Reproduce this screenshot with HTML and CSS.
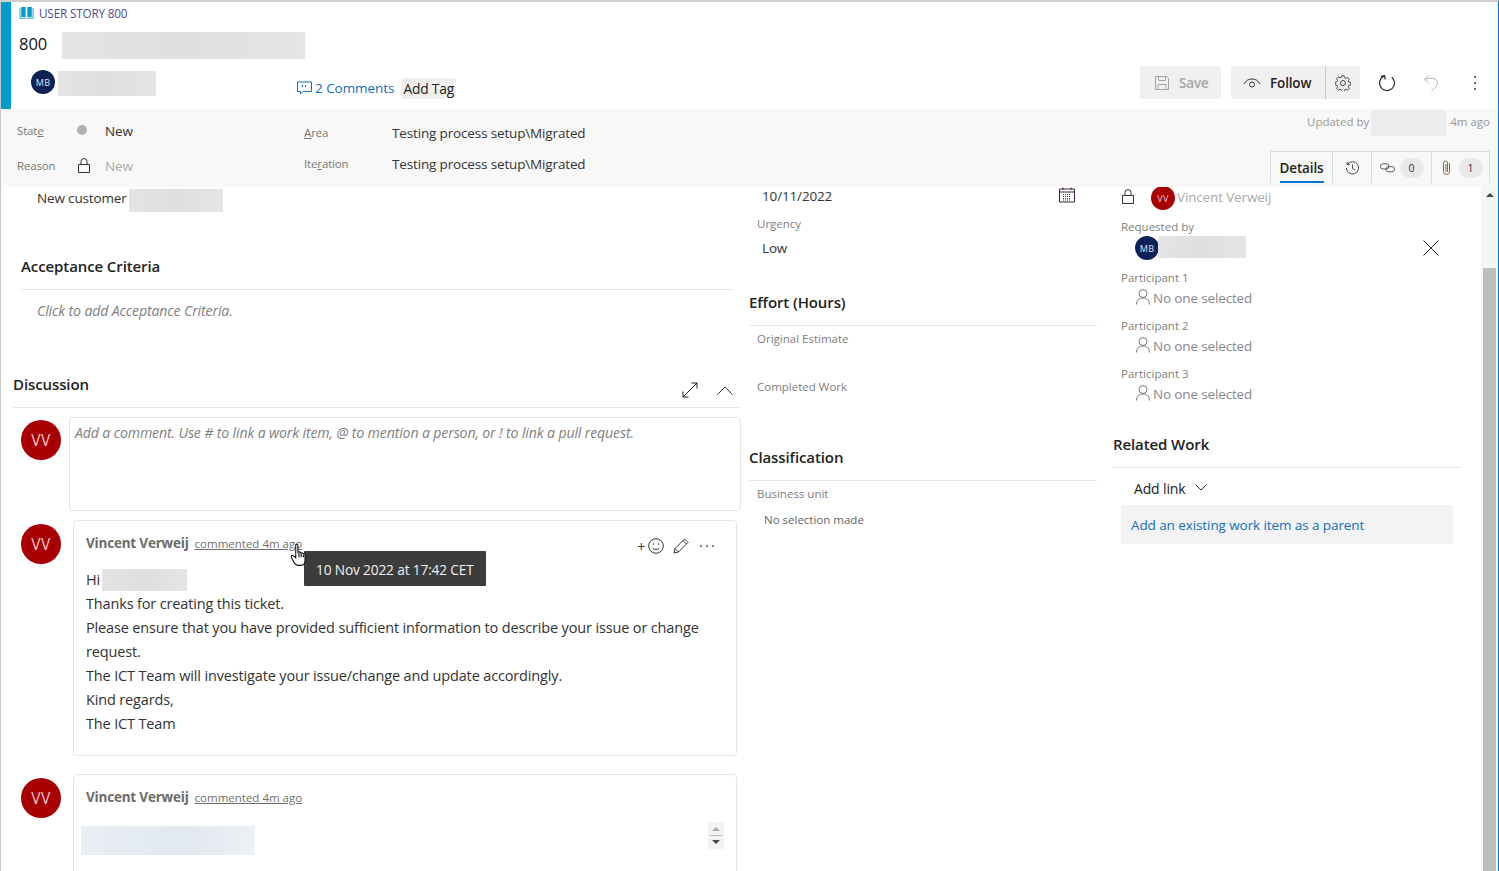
FILE: index.html
```html
<!DOCTYPE html>
<html lang="en">
<head>
<meta charset="utf-8">
<title>User Story 800</title>
<link rel="stylesheet" href="styles.css">
</head>
<body>
<div class="page">
  <header class="head">
    <div class="type-row">
      <svg class="ico16" viewBox="0 0 16 16"><path d="M.5 2.500v11.500h7M15.500 2.500v11.500h-7" fill="none" stroke="#009ccc"/><path d="M2 1h5v11.500H2zM9 1h5v11.500H9z" fill="#009ccc"/></svg>
      <span class="type-label">USER STORY 800</span>
    </div>
    <div class="title-row"><span class="item-id">800</span><span class="blur blur-title"></span></div>
    <div class="owner-row">
      <span class="avatar navy">MB</span><span class="blur blur-owner"></span>
      <a class="comments">
        <svg class="ico15" viewBox="0 0 15 14"><path d="M.5 1h14v9.500H6L3.500 13v-2.500h-3z" fill="none" stroke="#106ebe"/><path d="M5.500 4v2M8.500 4v2" stroke="#106ebe"/></svg>
        <span>2 Comments</span>
      </a>
      <span class="add-tag">Add Tag</span>
      <div class="actions">
        <button class="btn save">
          <svg class="ico16" viewBox="0 0 16 16"><path d="M1.500 1.500h11l2 2v11h-13z" fill="none" stroke="#a8a0a8"/><path d="M4.500 1.500v4h7v-4M4 14.500v-5h8v5" fill="none" stroke="#a8a0a8"/></svg>
          <span>Save</span>
        </button>
        <div class="follow-group">
          <button class="btn follow">
            <svg class="ico18" viewBox="0 0 18 12"><path d="M1 7c2-3.500 4.500-5 8-5s6 1.500 8 5" fill="none" stroke="#333"/><circle cx="9" cy="7.500" r="2.500" fill="none" stroke="#333"/></svg>
            <span>Follow</span>
          </button>
          <button class="btn gear">
            <svg class="ico16" viewBox="0 0 16 16"><path d="M6.700.8h2.600l.4 2 1.300.6 1.800-1 1.800 1.800-1 1.800.6 1.300 1.900.5v2.500l-1.900.5-.6 1.300 1 1.800-1.800 1.800-1.800-1-1.300.6-.4 1.900H6.700l-.4-1.900-1.300-.6-1.800 1-1.800-1.800 1-1.800-.6-1.300-1.900-.5V7.300l1.900-.5.6-1.300-1-1.800 1.800-1.800 1.800 1 1.300-.6z" fill="none" stroke="#444" transform="translate(.3 .1) scale(.96)"/><circle cx="8" cy="8" r="2.500" fill="none" stroke="#444"/></svg>
          </button>
        </div>
        <button class="icon-btn refresh">
          <svg class="ico18" viewBox="0 0 18 18"><path d="M5.800 2.300A7.500 7.500 0 1 0 13.800 3.300" fill="none" stroke="#222" stroke-width="1.200"/><path d="M2.800 2.400l3.800-.6.600 3.700" fill="none" stroke="#222" stroke-width="1.200"/></svg>
        </button>
        <button class="icon-btn undo">
          <svg class="ico18" viewBox="0 0 18 18"><path d="M6 1 1.500 5.500 5.500 9M1.500 5.500C7 3 14.500 4 14.500 9c0 3-3 5.500-6 8" fill="none" stroke="#b4b4b4"/></svg>
        </button>
        <button class="icon-btn more"><span class="dot"></span><span class="dot"></span><span class="dot"></span></button>
      </div>
    </div>
  </header>

  <section class="meta">
    <div class="meta-col state-col">
      <div class="meta-row"><span class="meta-label w60">Stat<u>e</u></span><span class="state-dot"></span><span class="meta-val">New</span></div>
      <div class="meta-row"><span class="meta-label w60">Reason</span>
        <svg class="lock" viewBox="0 0 12 15"><path d="M.5 6.500h11v8H.5zM3 6.500V3.500a3 3 0 0 1 6 0v3" fill="none" stroke="#333"/></svg>
        <span class="meta-val muted">New</span></div>
    </div>
    <div class="meta-col area-col">
      <div class="meta-row"><span class="meta-label w88"><u>A</u>rea</span><span class="meta-val">Testing process setup\Migrated</span></div>
      <div class="meta-row"><span class="meta-label w88">Ite<u>r</u>ation</span><span class="meta-val">Testing process setup\Migrated</span></div>
    </div>
    <div class="meta-right">
      <div class="updated"><span>Updated by</span><span class="blur blur-upd"></span><span>4m ago</span></div>
      <div class="tabs">
        <div class="tab tab-details"><span>Details</span></div>
        <div class="tab tab-hist">
          <svg class="ico15" viewBox="0 0 16 16"><path d="M2.500 3.500A7 7 0 1 1 1 8" fill="none" stroke="#333"/><path d="M2 1v3h3M8 4v4.500l3 1.500" fill="none" stroke="#333"/></svg>
        </div>
        <div class="tab tab-links">
          <svg class="ico15" viewBox="0 0 16 10"><rect x=".5" y=".5" width="9" height="5.500" rx="2.700" fill="none" stroke="#555"/><rect x="6.500" y="3.500" width="9" height="5.500" rx="2.700" fill="none" stroke="#555"/></svg>
          <span class="count">0</span>
        </div>
        <div class="tab tab-att">
          <svg class="clip" viewBox="0 0 9 15"><path d="M7.500 3v8.500a3 3 0 0 1-6 0V3a2 2 0 0 1 4 0v8a.8.800 0 0 1-1.600 0V4" fill="none" stroke="#8a6a30"/></svg>
          <span class="count">1</span>
        </div>
      </div>
    </div>
  </section>

  <main class="body">
    <div class="cols">
      <div class="col col-left">
        <div class="desc-line"><span class="text">New customer</span><span class="blur blur-cust"></span></div>
        <h2 class="sec sec-ac">Acceptance Criteria</h2>
        <p class="placeholder ac-ph">Click to add Acceptance Criteria.</p>
        <div class="disc-head">
          <h2 class="disc-title">Discussion</h2>
          <svg class="ico16" viewBox="0 0 16 16"><path d="M1 15 15 1M9.500 1H15v5.500M1 9.500V15h5.500" fill="none" stroke="#222"/></svg>
          <svg class="ico-chev" viewBox="0 0 16 9"><path d="M.5 8.500 8 1l7.500 7.500" fill="none" stroke="#333"/></svg>
        </div>
        <div class="editor-row">
          <span class="avatar red big">VV</span>
          <div class="editor">Add a comment. Use # to link a work item, @ to mention a person, or ! to link a pull request.</div>
        </div>
        <article class="comment first">
          <span class="avatar red big">VV</span>
          <div class="card card1">
            <div class="card-head">
              <span class="author">Vincent Verweij</span><a class="when">commented 4m ago</a>
              <div class="card-actions">
                <span class="plus">+</span>
                <svg class="ico16" viewBox="0 0 16 16"><circle cx="8" cy="8" r="7.300" fill="none" stroke="#333"/><circle cx="5.500" cy="6" r=".8" fill="#333"/><circle cx="10.500" cy="6" r=".8" fill="#333"/><path d="M4.500 10c1.800 2 5.200 2 7 0" fill="none" stroke="#333"/></svg>
                <svg class="ico16 pen" viewBox="0 0 16 16"><path d="M1 15l1-4.500L11.500 1 15 4.500 5.500 14zM10 2.500 13.500 6M2 10.500 5.500 14" fill="none" stroke="#333"/></svg>
                <span class="dots3"><i></i><i></i><i></i></span>
              </div>
            </div>
            <div class="card-body">
              <div class="hi">Hi<span class="blur blur-hi"></span></div>
              <div>Thanks for creating this ticket.</div>
              <div>Please ensure that you have provided sufficient information to describe your issue or change request.</div>
              <div>The ICT Team will investigate your issue/change and update accordingly.</div>
              <div>Kind regards,</div>
              <div>The ICT Team</div>
            </div>
          </div>
        </article>
        <article class="comment second">
          <span class="avatar red big">VV</span>
          <div class="card card2">
            <div class="card-head">
              <span class="author">Vincent Verweij</span><a class="when">commented 4m ago</a>
            </div>
            <div class="attach-row">
              <span class="blur blur-attach"></span>
              <span class="mini-scroll"><i class="up"></i><b></b><i class="down"></i></span>
            </div>
          </div>
        </article>
      </div>

      <div class="col col-mid">
        <div class="date-row"><span class="text">10/11/2022</span>
          <svg class="ico16" viewBox="0 0 16 16"><path d="M.5 2h15v13H.5zM.5 5h15M4 .5v2.500M12 .5v2.500" fill="none" stroke="#3a2040"/><path d="M4 7.500h8M4 9.500h8M4 11.500h8M4 13h8" stroke="#6a2a80" stroke-dasharray="1 1"/></svg>
        </div>
        <div class="lbl urg">Urgency</div>
        <div class="text low">Low</div>
        <h2 class="sec sec-effort">Effort (Hours)</h2>
        <div class="lbl oe">Original Estimate</div>
        <div class="lbl cw">Completed Work</div>
        <h2 class="sec sec-class">Classification</h2>
        <div class="lbl bu">Business unit</div>
        <div class="nosel">No selection made</div>
      </div>

      <div class="col col-right">
        <div class="assigned">
          <svg class="lock" viewBox="0 0 12 15"><path d="M.5 6.500h11v8H.5zM3 6.500V3.500a3 3 0 0 1 6 0v3" fill="none" stroke="#333"/></svg>
          <span class="avatar red">VV</span><span class="muted-name">Vincent Verweij</span>
        </div>
        <div class="lbl req">Requested by</div>
        <div class="req-row">
          <span class="avatar navy">MB</span><span class="blur blur-req"></span>
          <svg class="ico-x" viewBox="0 0 16 16"><path d="M.5.5l15 15M15.500.5l-15 15" fill="none" stroke="#223"/></svg>
        </div>
        <div class="lbl part">Participant 1</div>
        <div class="none-row"><svg class="person" viewBox="0 0 14 16"><circle cx="7" cy="4.500" r="4" fill="none" stroke="#777"/><path d="M.5 15.500c0-4 2.500-6.500 6.500-6.500s6.500 2.500 6.500 6.500" fill="none" stroke="#777"/></svg><span>No one selected</span></div>
        <div class="lbl part">Participant 2</div>
        <div class="none-row"><svg class="person" viewBox="0 0 14 16"><circle cx="7" cy="4.500" r="4" fill="none" stroke="#777"/><path d="M.5 15.500c0-4 2.500-6.500 6.500-6.500s6.500 2.500 6.500 6.500" fill="none" stroke="#777"/></svg><span>No one selected</span></div>
        <div class="lbl part">Participant 3</div>
        <div class="none-row"><svg class="person" viewBox="0 0 14 16"><circle cx="7" cy="4.500" r="4" fill="none" stroke="#777"/><path d="M.5 15.500c0-4 2.500-6.500 6.500-6.500s6.500 2.500 6.500 6.500" fill="none" stroke="#777"/></svg><span>No one selected</span></div>
        <h2 class="sec sec-rel">Related Work</h2>
        <div class="add-link"><span>Add link</span><svg class="ico-down" viewBox="0 0 12 7"><path d="M.5.5 6 6l5.500-5.500" fill="none" stroke="#333"/></svg></div>
        <div class="add-parent">Add an existing work item as a parent</div>
      </div>
    </div>
    <div class="scrollbar"><span class="arrow-up"></span><span class="thumb"></span></div>
  </main>

  <div class="tooltip">10 Nov 2022 at 17:42 CET</div>
  <svg class="cursor" viewBox="0 0 16 22"><path d="M5 1.500c1-.8 2-.3 2 1v6l1-.3c.8-.2 1.300.2 1.500.8l.8-.1c.8-.1 1.200.3 1.400.9.900-.2 1.800.2 1.800 1.200v5c0 2.500-1.500 4.500-4 4.500H7c-1.500 0-2.500-1-3.500-2.500L1 13c-.6-1 .6-2.200 1.700-1.400L5 13.500z" fill="#fff" stroke="#111"/><path d="M8 9v4M10 9.500V13M12 10.500V13" stroke="#111" fill="none"/></svg>
</div>
</body>
</html>
```
FILE: styles.css
```css
* { box-sizing: border-box; }
html, body { margin: 0; padding: 0; height: 100%; overflow: hidden; background: #fff; }
body { font-family: "Open Sans", "Noto Sans", sans-serif; font-size: 13.5px; letter-spacing: -.15px; color: #333; }
button { font: inherit; letter-spacing: inherit; border: 0; padding: 0; background: none; color: inherit; }
svg { display: block; flex: none; }
h2 { margin: 0; font-weight: 600; }
a { color: inherit; }

.page { position: relative; width: 1499px; height: 871px; display: flex; flex-direction: column; border-top: 2px solid #cfcfcf; border-left: 1px solid #c8c8c8; border-right: 1px solid #0078d4; overflow: hidden; }
.blur { display: block; flex: none; background: linear-gradient(90deg, #e4e4e4, #dfdfdf 50%, #e5e5e5); }

.ico15 { width: 15px; height: 14px; }
.ico16 { width: 16px; height: 16px; }
.ico18 { width: 18px; height: 18px; }

.avatar { display: flex; align-items: center; justify-content: center; flex: none; width: 24px; height: 24px; border-radius: 50%; font-size: 9px; letter-spacing: .3px; font-kerning: none; color: #dfe4ee; }
.avatar.big { width: 40px; height: 40px; font-size: 15.5px; letter-spacing: .6px; }
.navy { background: #0c2257; }
.red { background: #a80000; color: #f0c8c8; }

.head { flex: none; height: 107px; border-left: 10px solid #009ccc; }
.type-row { display: flex; align-items: center; height: 24px; padding: 0 0 2px 8px; gap: 5px; }
.type-row .ico16 { width: 15px; height: 14px; }
.type-label { font-size: 11.7px; color: #4c4c94; }
.title-row { display: flex; align-items: center; height: 40px; padding-left: 8px; }
.item-id { width: 43px; font-size: 16.5px; color: #111; letter-spacing: 0; margin-top: -6px; }
.blur-title { width: 243px; height: 27px; margin-top: -2px; }
.owner-row { display: flex; align-items: flex-start; height: 43px; padding-left: 20px; }
.owner-row .avatar { margin-top: 4px; }
.blur-owner { width: 98px; height: 25px; margin: 5px 0 0 3px; }
.comments { display: flex; align-items: center; gap: 3px; margin: 13px 0 0 141px; color: #106ebe; height: 18px; letter-spacing: -.05px; }
.add-tag { margin: 12px 0 0 7px; height: 21px; line-height: 21px; padding: 0 2px; background: #f0f0f0; border-radius: 2px; font-weight: 500; color: #222; font-size: 13.8px; letter-spacing: -.2px; }
.actions { display: flex; align-items: flex-start; margin-left: auto; }
.btn { display: flex; align-items: center; height: 33px; background: #f0f0f0; border-radius: 2px; }
.save { width: 81px; gap: 9px; padding-left: 14px; color: #a6a6a6; font-weight: 600; }
.follow-group { display: flex; margin-left: 10px; }
.follow { width: 95px; padding-left: 12px; gap: 9px; font-weight: 600; color: #222; border-right: 1px solid #c8c8c8; border-radius: 2px 0 0 2px; }
.follow .ico18 { height: 12px; }
.gear { width: 34px; justify-content: center; border-radius: 0 2px 2px 0; }
.icon-btn { display: flex; flex-direction: column; align-items: center; justify-content: center; height: 33px; }
.refresh { width: 18px; margin-left: 18px; }
.undo { width: 18px; margin-left: 27px; }
.more { width: 4px; margin: 0 21px 0 32px; gap: 4px; }
.dot { width: 2px; height: 2px; background: #333; border-radius: 1px; }

.meta { flex: none; height: 78px; display: flex; background: #f8f8f8; position: relative; }
.meta-col { display: flex; flex-direction: column; }
.meta-row { display: flex; align-items: center; }
.state-col { width: 303px; padding: 12px 0 0 16px; gap: 16px; }
.state-col .meta-row { height: 19px; }
.area-col { padding-top: 14px; gap: 11px; }
.area-col .meta-row { height: 20px; }
.area-col .meta-label { margin-top: -2px; }
.meta-label { font-size: 11.5px; color: #777; }
.w60 { width: 60px; }
.w88 { width: 88px; }
.meta-val { color: #333; }
.muted { color: #aaa; }
.state-dot { width: 10px; height: 10px; border-radius: 50%; background: #b2b2b2; margin: 0 18px 2px 0; }
.lock { width: 12px; height: 15px; }
.state-col .lock { margin: 0 15px 0 1px; }
.meta-right { margin-left: auto; display: flex; flex-direction: column; align-items: flex-end; padding-right: 8px; }
.updated { display: flex; align-items: center; gap: 2px; height: 26px; font-size: 11.5px; color: #999; margin-top: 1px; letter-spacing: 0; }
.updated > span:not(.blur) { margin-top: -4px; }
.updated span:last-child { margin-left: 2px; }
.blur-upd { width: 75px; height: 26px; background: #ececec; }
.tabs { display: flex; height: 32px; margin-top: 15px; border: 1px solid #ddd; border-bottom: 0; }
.tab { display: flex; align-items: center; justify-content: center; position: relative; border-left: 1px solid #ddd; gap: 5px; }
.tab:first-child { border-left: 0; }
.tab-details { width: 61px; font-weight: 600; color: #222; }
.tab-details::after { content: ""; position: absolute; left: 9px; right: 8px; bottom: 0; height: 2px; background: #0078d4; }
.tab-hist { width: 39px; }
.tab-links { width: 60px; }
.tab-att { width: 58px; gap: 8px; padding-left: 3px; }
.tab .ico15 { width: 15px; }
.clip { width: 9px; height: 15px; }
.count { display: flex; align-items: center; justify-content: center; width: 24px; height: 20px; border-radius: 10px; background: #e9e9e9; font-size: 10.5px; }

.body { flex: 1; min-height: 0; display: flex; overflow: hidden; }
.cols { flex: 1; display: flex; min-width: 0; }
.col { flex: none; }
.col-left { width: 740px; padding-left: 12px; }
.col-mid { width: 364px; padding-left: 8px; }
.col-right { width: 370px; }
.text { color: #333; }
.sec { font-size: 15px; color: #222; letter-spacing: -.1px; line-height: 22px; border-bottom: 1px solid #e6e6e6; }
.lbl { font-size: 11.5px; color: #808080; line-height: 16px; letter-spacing: 0; }

.desc-line { display: flex; align-items: flex-start; padding-left: 24px; height: 25px; margin-top: 2px; line-height: 19px; }
.blur-cust { width: 94px; height: 23px; margin-left: 2px; }
.sec-ac { margin: 41px 0 0 8px; width: 712px; height: 35px; }
.placeholder { margin: 0; font-style: italic; color: #808080; font-size: 14.15px; }
.ac-ph { margin: 11px 0 0 24px; line-height: 20px; }
.disc-head { display: flex; align-items: center; height: 38px; margin-top: 49px; width: 728px; border-bottom: 1px solid #e6e6e6; padding-right: 8px; }
.disc-title { font-size: 15px; color: #222; margin-right: auto; margin-top: -9px; letter-spacing: -.1px; }
.disc-head svg { margin-top: 3px; }
.ico-chev { width: 16px; height: 9px; margin-left: 19px; }
.editor-row { display: flex; margin-top: 9px; padding-left: 8px; }
.editor-row .avatar { margin-top: 3px; }
.editor { margin-left: 8px; width: 672px; height: 94px; border: 1px solid #e6e6e6; border-radius: 4px; padding: 5px 5px; font-style: italic; color: #808080; line-height: 20px; font-size: 14.15px; }
.comment { display: flex; padding-left: 8px; gap: 12px; }
.comment .avatar { margin-top: 4px; }
.comment.first { margin-top: 9px; }
.comment.second { margin-top: 18px; }
.card { width: 664px; border: 1px solid #e6e6e6; border-radius: 4px; padding: 0 12px; }
.card1 { height: 236px; }
.card2 { height: 110px; }
.card-head { display: flex; align-items: center; height: 46px; padding-bottom: 2px; }
.author { font-weight: 700; color: #6b6b6b; letter-spacing: -.2px; }
.when { margin-left: 6px; font-size: 11.5px; color: #6f6f6f; text-decoration: underline; letter-spacing: 0; }
.card-actions { display: flex; align-items: center; margin-left: auto; padding-right: 10px; margin-top: 6px; }
.plus { font-size: 14px; color: #333; margin-right: 3px; }
.pen { margin-left: 9px; }
.dots3 { display: flex; gap: 4px; margin-left: 11px; }
.dots3 i { width: 2px; height: 2px; background: #555; border-radius: 50%; }
.card-body { line-height: 24px; padding-top: 1px; font-size: 14.5px; }
.hi { display: flex; align-items: center; height: 24px; }
.blur-hi { width: 85px; height: 22px; margin-left: 2px; }
.attach-row { display: flex; align-items: flex-start; margin: 5px 0 0 -5px; justify-content: space-between; }
.blur-attach { width: 174px; height: 29px; background: linear-gradient(90deg, #e8eef4, #e1e8ef 60%, #edf1f5); }
.mini-scroll { display: flex; flex-direction: column; align-items: center; justify-content: space-between; width: 16px; height: 27px; background: #f2f2f2; padding: 5px 0; margin-top: -4px; }
.mini-scroll b { width: 12px; height: 1px; background: #bbb; }
.mini-scroll .up { width: 0; height: 0; border: 4px solid transparent; border-top: 0; border-bottom: 4px solid #aaa; }
.mini-scroll .down { width: 0; height: 0; border: 4px solid transparent; border-bottom: 0; border-top: 4px solid #444; }

.date-row { display: flex; justify-content: space-between; align-items: flex-start; padding: 0 30px 0 13px; height: 29px; line-height: 20px; }
.date-row .text { margin-top: -1px; }
.urg { margin: 0 0 0 8px; }
.low { margin: 6px 0 0 13px; line-height: 20px; }
.sec-effort { margin-top: 33px; height: 35px; width: 348px; }
.oe { margin: 5px 0 0 8px; }
.cw { margin: 32px 0 0 8px; }
.sec-class { margin-top: 51px; height: 35px; width: 348px; }
.bu { margin: 5px 0 0 8px; }
.nosel { margin: 8px 0 0 15px; font-size: 11.5px; color: #666; letter-spacing: 0; line-height: 20px; }

.col-right { padding-left: 8px; }
.assigned { display: flex; align-items: flex-start; height: 33px; margin-top: -1px; padding-left: 8px; }
.assigned .lock { margin: 3px 17px 0 1px; }
.muted-name { margin-left: 2px; color: #aaa; line-height: 22px; }
.req { margin-left: 8px; }
.req-row { display: flex; align-items: flex-start; padding-left: 22px; height: 26px; margin-top: 1px; }
.blur-req { width: 88px; height: 22px; margin-left: -1px; }
.ico-x { width: 16px; height: 16px; margin: 4px 0 0 177px; }
.part { margin: 8px 0 0 8px; }
.none-row { display: flex; align-items: center; height: 24px; padding-left: 23px; color: #888; gap: 3px; }
.person { width: 14px; height: 16px; margin-top: -3px; }
.sec-rel { margin-top: 27px; height: 35px; width: 348px; }
.add-link { display: flex; align-items: center; height: 37px; padding: 4px 0 0 21px; color: #222; gap: 10px; font-weight: 500; font-size: 14px; }
.ico-down { width: 12px; height: 7px; margin-top: -2px; }
.add-parent { margin-left: 8px; width: 332px; height: 39px; line-height: 41px; padding-left: 10px; background: #f3f3f3; color: #106ebe; letter-spacing: -.09px; }

.scrollbar { flex: none; width: 17px; background: #f5f5f5; display: flex; flex-direction: column; align-items: center; }
.arrow-up { width: 0; height: 0; margin-top: 6px; border: 4px solid transparent; border-top: 0; border-bottom: 4px solid #444; }
.thumb { width: 13px; margin-top: 71px; flex: 1; background: #bdbdbd; }

.tooltip { position: absolute; left: 303px; top: 549px; width: 182px; height: 35px; line-height: 37px; padding-left: 12px; background: #3c3c3c; border-radius: 1px; color: #f0f0f0; font-size: 13.7px; }
.cursor { position: absolute; left: 289px; top: 541px; width: 18px; height: 24px; }
```
